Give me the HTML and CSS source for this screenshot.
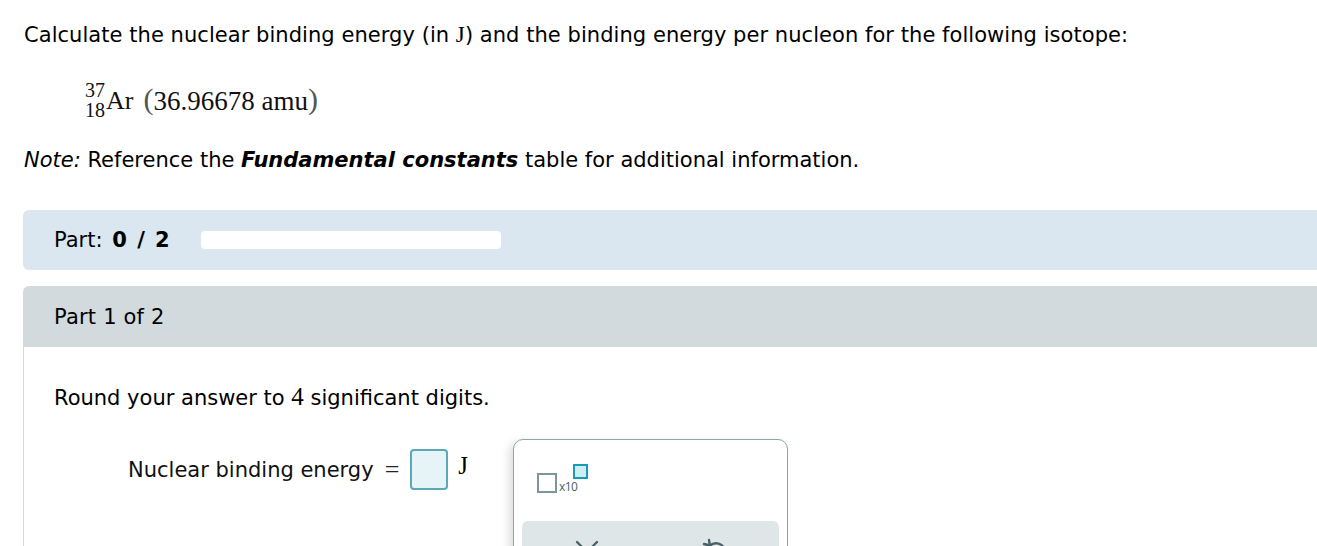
FILE: index.html
```html
<!DOCTYPE html>
<html>
<head>
<meta charset="utf-8">
<link rel="stylesheet" href="styles.css">
</head>
<body>
<div class="page">
  <p class="question">Calculate the nuclear binding energy (in <span class="serif">J</span>) and the binding energy per nucleon for the following isotope:</p>
  <div class="isotope">
    <span class="nuclide"><span class="sup">37</span><span class="sub">18</span></span><span class="el">Ar</span>
    <span class="paren">(</span><span class="mass">36.96678 amu</span><span class="paren">)</span>
  </div>
  <p class="note"><i>Note:</i> Reference the <b><i>Fundamental constants</i></b> table for additional information.</p>

  <div class="progress">
    <span class="plabel">Part: <b>0 / 2</b></span>
    <span class="pbar"></span>
  </div>

  <div class="part">
    <div class="part-head">Part 1 of 2</div>
    <div class="part-body">
      <p class="round">Round your answer to <span class="num">4</span> significant digits.</p>
      <div class="answer-row">
        <div class="answer">
          <span class="alabel">Nuclear binding energy</span>
          <span class="eq">=</span>
          <span class="inbox"></span>
          <span class="unit">J</span>
        </div>
        <div class="palette">
          <div class="sci">
            <span class="sq-base"></span><span class="x10">x10</span><span class="sq-exp"></span>
          </div>
          <div class="tools">
            <svg class="ic-x" width="24" height="24" viewBox="0 0 24 24"><path d="M2 2 L22 22 M22 2 L2 22" stroke="#4a6068" stroke-width="2.4" stroke-linecap="round" fill="none"/></svg>
            <svg class="ic-undo" width="28" height="28" viewBox="0 0 28 28"><path d="M6 14 A9 9 0 1 0 9 7.5" stroke="#4a6068" stroke-width="2.4" stroke-linecap="round" fill="none"/><path d="M3 6 L9 7.5 L8 2" stroke="#4a6068" stroke-width="2.4" stroke-linecap="round" stroke-linejoin="round" fill="none"/></svg>
          </div>
        </div>
      </div>
    </div>
  </div>
</div>
</body>
</html>
```
FILE: styles.css
```css
html, body {
  margin: 0;
  padding: 0;
  background: #fff;
  overflow: hidden;
}
body {
  font-family: "DejaVu Sans", Verdana, sans-serif;
  color: #000;
  font-size: 21px;
}
.page {
  padding: 21px 0 0 23px;
}
.serif {
  font-family: "Liberation Serif", "Times New Roman", serif;
  font-size: 23px;
}
.question {
  margin: 0 0 0 1px;
  line-height: 28px;
  letter-spacing: 0.05px;
}
.isotope {
  margin: 26px 0 0 62px;
  font-family: "Liberation Serif", "Times New Roman", serif;
  font-size: 26px;
  display: flex;
  align-items: center;
  height: 48px;
  color: #111;
}
.nuclide {
  display: inline-flex;
  flex-direction: column;
  align-items: flex-end;
  font-size: 20px;
  line-height: 20px;
  margin-right: 1px;
  margin-top: 2px;
}
.el { margin-right: 10px; margin-top: 4px; }
.paren { font-size: 30px; color: #555; }
.mass { margin-top: 4px; font-size: 27px; }
.note {
  margin: 23px 0 0 1px;
  line-height: 28px;
}
.progress {
  margin-top: 36px;
  height: 60px;
  background: #dae6f0;
  border-radius: 6px 0 0 6px;
  display: flex;
  align-items: center;
  padding-left: 31px;
}
.plabel { width: 147px; }
.plabel b { word-spacing: 3px; margin-left: 3px; }
.pbar {
  width: 300px;
  height: 18px;
  background: #fff;
  border-radius: 4px;
}
.part {
  margin-top: 16px;
}
.part-head {
  height: 61px;
  background: #d2dadd;
  border-radius: 6px 0 0 0;
  display: flex;
  align-items: center;
  padding-left: 31px;
  letter-spacing: 0.2px;
}
.part-body {
  border-left: 1px solid #d2dadd;
  padding: 36px 0 0 30px;
  height: 200px;
}
.round {
  margin: 0;
  line-height: 28px;
}
.num {
  font-family: "Liberation Serif", "Times New Roman", serif;
  font-size: 25px;
}
.answer-row {
  display: flex;
  margin-top: 28px;
  align-items: flex-start;
}
.answer {
  display: flex;
  align-items: center;
  margin-left: 74px;
  margin-top: 9px;
  height: 41px;
}
.alabel { color: #111; }
.eq {
  font-family: "Liberation Serif", serif;
  font-size: 26px;
  margin: 0 11px 0 11px;
  color: #222;
}
.inbox {
  width: 34px;
  height: 37px;
  background: #e6f4f8;
  border: 2px solid #59a9b9;
  border-radius: 4px;
}
.unit {
  font-family: "Liberation Serif", serif;
  font-size: 25px;
  margin-left: 10px;
  margin-top: -8px;
}
.palette {
  margin-left: 45px;
  width: 275px;
  height: 140px;
  border: 1px solid #8fa3aa;
  border-radius: 10px;
  box-shadow: -4px 3px 8px rgba(60, 80, 90, 0.18);
  background: #fff;
  padding: 8px 8px 0 8px;
  box-sizing: border-box;
  margin-top: -1px;
}
.sci {
  position: relative;
  height: 73px;
}
.sq-base {
  position: absolute;
  left: 15px;
  top: 25px;
  width: 16px;
  height: 16px;
  border: 2px solid #7e959d;
  background: #fff;
}
.x10 {
  position: absolute;
  left: 37px;
  top: 33px;
  font-family: "Open Sans", "Liberation Sans", sans-serif;
  font-size: 12px;
  line-height: 12px;
  color: #4a5f66;
  letter-spacing: -0.6px;
}
.sq-exp {
  position: absolute;
  left: 51px;
  top: 16px;
  width: 11px;
  height: 11px;
  border: 2px solid #1a9bb5;
  background: #cdeef4;
}
.tools {
  height: 60px;
  background: #dfe6e8;
  border-radius: 6px;
  display: flex;
  align-items: flex-start;
  padding-top: 19px;
  box-sizing: border-box;
}
.ic-x { margin-left: 53px; }
.ic-undo { margin-left: 102px; margin-top: -2px; }
```
